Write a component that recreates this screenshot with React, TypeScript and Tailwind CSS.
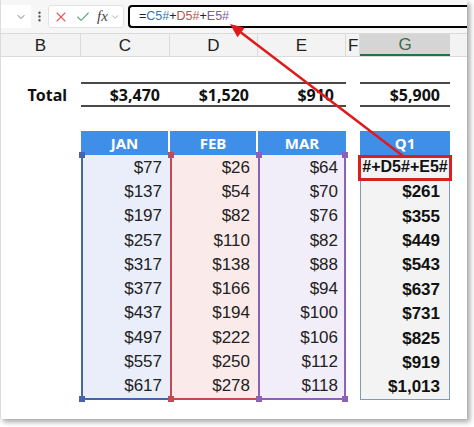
import { Check, ChevronDown, EllipsisVertical, X } from 'lucide-react';

const jan = ['$77', '$137', '$197', '$257', '$317', '$377', '$437', '$497', '$557', '$617'];
const feb = ['$26', '$54', '$82', '$110', '$138', '$166', '$194', '$222', '$250', '$278'];
const mar = ['$64', '$70', '$76', '$82', '$88', '$94', '$100', '$106', '$112', '$118'];
const q1 = ['$261', '$355', '$449', '$543', '$637', '$731', '$825', '$919', '$1,013'];

const Handle = ({ pos, color }: { pos: string; color: string }) => (
  <span className={`absolute w-[6px] h-[6px] ${pos} ${color}`} />
);

export default function App() {
  return (
    <div className="w-[474px] h-[427px] bg-white overflow-hidden font-['Liberation_Sans',Arial,sans-serif] text-[#222]">
      <div className="relative w-[467px] h-[419px] bg-white border-l border-[#dcdcdc] shadow-[3px_3px_5px_rgba(0,0,0,0.35)] flex flex-col">
        {/* Formula bar */}
        <div className="h-[33px] flex items-start pt-[5px] bg-[#f6f6f6]">
          <div className="w-[30px] h-[23px] bg-white flex items-center justify-end pr-[4px]">
            <ChevronDown size={12} strokeWidth={1.6} className="text-[#555]" />
          </div>
          <div className="w-[17px] h-[23px] flex items-center justify-center">
            <EllipsisVertical size={13} strokeWidth={2.4} className="text-[#555]" />
          </div>
          <div className="w-[76px] h-[23px] bg-white border border-[#e2e2e2] rounded-[3px] flex items-center pl-[4px]">
            <X size={16} strokeWidth={1.6} className="text-[#e05a5a]" />
            <Check size={16} strokeWidth={1.6} className="ml-[6px] text-[#5aa97c]" />
            <span className="ml-[6px] font-['Liberation_Serif',serif] italic text-[15px] leading-none text-[#444]">fx</span>
            <ChevronDown size={10} strokeWidth={1.4} className="ml-[2px] text-[#777]" />
          </div>
          <div className="ml-[4px] flex-1 h-[23px] bg-white border-2 border-r-0 border-black rounded-l-[4px] flex items-center pl-[9px] text-[12.5px]">
            <span>=</span>
            <span className="text-[#2f77b7]">C5#</span>
            <span>+</span>
            <span className="text-[#c0504d]">D5#</span>
            <span>+</span>
            <span className="text-[#7b5aa6]">E5#</span>
          </div>
        </div>

        {/* Column letters */}
        <div className="h-[24px] flex bg-[#f3f3f3] border-y border-[#dadada] text-[17px] leading-none">
          <div className="w-[80px] flex items-center justify-center border-r border-[#dadada]">B</div>
          <div className="w-[89px] flex items-center justify-center border-r border-[#dadada]">C</div>
          <div className="w-[88px] flex items-center justify-center border-r border-[#dadada]">D</div>
          <div className="w-[88px] flex items-center justify-center border-r border-[#dadada]">E</div>
          <div className="w-[14px] flex items-center justify-start pl-[2px] border-r border-[#dadada]">F</div>
          <div className="w-[90px] flex items-center justify-center bg-[#d5d5d5] border-b-2 border-[#217346] text-[#3c6b4c]">G</div>
          <div className="flex-1" />
        </div>

        <div className="h-[25px]" />

        {/* Totals */}
        <div className="h-[25px] flex font-['Noto_Sans',sans-serif] font-bold text-[16px] leading-none text-[#111]">
          <div className="w-[80px] flex items-center justify-end pr-[14px]">Total</div>
          <div className="w-[265px] flex border-y-2 border-[#4a4a4a]">
            <div className="w-[89px] flex items-center justify-end pr-[10px]">$3,470</div>
            <div className="w-[88px] flex items-center justify-end pr-[9px]">$1,520</div>
            <div className="w-[88px] flex items-center justify-end pr-[12px]">$910</div>
          </div>
          <div className="w-[14px]" />
          <div className="w-[90px] flex items-center justify-end pr-[10px] border-y-2 border-[#4a4a4a]">$5,900</div>
        </div>

        <div className="h-[24px]" />

        {/* Monthly table */}
        <div className="flex leading-none">
          <div className="w-[80px]" />

          <div className="w-[89px] flex flex-col">
            <div className="h-[24px] mr-[2px] bg-[#3f8fe8] text-white font-['Noto_Sans',sans-serif] font-bold text-[15px] flex items-center justify-center">JAN</div>
            <div className="relative h-[245px] flex flex-col bg-[#e9eefa] border-l-2 border-b-2 border-[#4466ad] text-[17px]">
              {jan.map((v) => (
                <div key={v} className="flex-1 flex items-center justify-end pr-[8px]">{v}</div>
              ))}
              <Handle pos="-left-[4px] -top-[3px]" color="bg-[#4466ad]" />
              <Handle pos="-left-[4px] -bottom-[4px]" color="bg-[#4466ad]" />
            </div>
          </div>

          <div className="w-[88px] flex flex-col">
            <div className="h-[24px] mr-[2px] bg-[#3f8fe8] text-white font-['Noto_Sans',sans-serif] font-bold text-[15px] flex items-center justify-center">FEB</div>
            <div className="relative h-[245px] flex flex-col bg-[#fbeaea] border-l-2 border-b-2 border-[#c24a55] text-[17px]">
              {feb.map((v) => (
                <div key={v} className="flex-1 flex items-center justify-end pr-[8px]">{v}</div>
              ))}
              <Handle pos="-left-[4px] -top-[3px]" color="bg-[#c24a55]" />
              <Handle pos="-left-[4px] -bottom-[4px]" color="bg-[#c24a55]" />
            </div>
          </div>

          <div className="w-[88px] flex flex-col">
            <div className="h-[24px] bg-[#3f8fe8] text-white font-['Noto_Sans',sans-serif] font-bold text-[15px] flex items-center justify-center">MAR</div>
            <div className="relative h-[245px] flex flex-col bg-[#f2eef9] border-x-2 border-b-2 border-[#8b62b8] text-[17px]">
              {mar.map((v) => (
                <div key={v} className="flex-1 flex items-center justify-end pr-[6px]">{v}</div>
              ))}
              <Handle pos="-left-[4px] -top-[3px]" color="bg-[#8b62b8]" />
              <Handle pos="-right-[4px] -top-[3px]" color="bg-[#8b62b8]" />
              <Handle pos="-left-[4px] -bottom-[4px]" color="bg-[#8b62b8]" />
              <Handle pos="-right-[4px] -bottom-[4px]" color="bg-[#8b62b8]" />
            </div>
          </div>

          <div className="w-[14px]" />

          <div className="w-[90px] flex flex-col">
            <div className="h-[24px] bg-[#3f8fe8] text-white font-['Noto_Sans',sans-serif] font-bold text-[15px] flex items-center justify-center">Q1</div>
            <div className="h-[245px] flex flex-col bg-[#f3f3f3] border border-t-0 border-[#7e9bbb] text-[17px] font-bold text-[#111]">
              <div className="relative flex-1 flex items-center justify-center text-[16px]">
                #+D5#+E5#
                <span className="absolute -left-[3px] -right-[3px] top-0 -bottom-[2px] border-[3px] border-[#da1f1f]" />
              </div>
              {q1.map((v) => (
                <div key={v} className="flex-1 flex items-center justify-end pr-[9px]">{v}</div>
              ))}
            </div>
          </div>
        </div>

        {/* Pointer from the spill cell up to the formula */}
        <svg className="absolute inset-0 pointer-events-none" width="467" height="419">
          <line x1="402" y1="156" x2="240" y2="32.5" stroke="#e01a1a" strokeWidth="2.5" />
          <polygon points="229,24 243.7,27.7 236.5,37.3" fill="#e01a1a" />
        </svg>
      </div>
    </div>
  );
}
